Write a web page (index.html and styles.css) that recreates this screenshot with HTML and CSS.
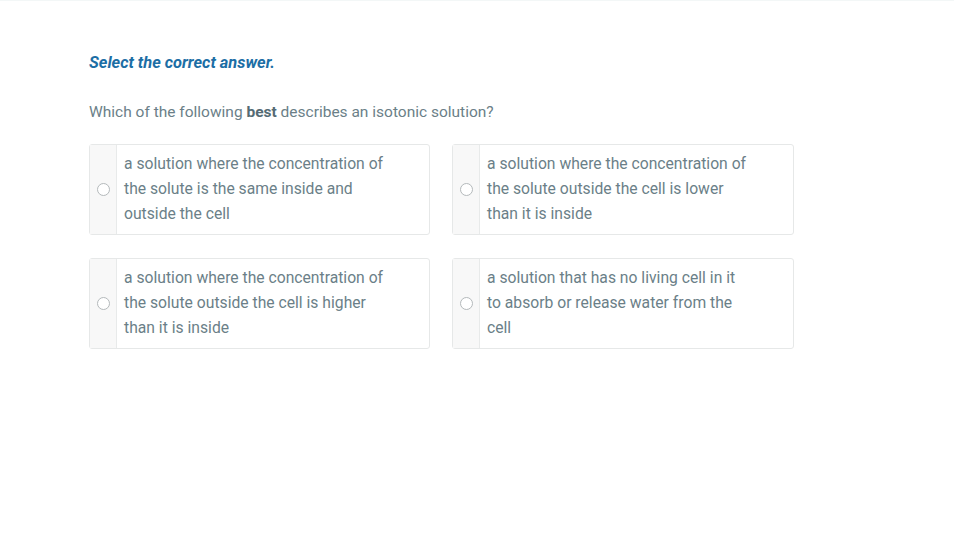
FILE: index.html
```html
<!DOCTYPE html>
<html>
<head>
<meta charset="utf-8">
<link rel="stylesheet" href="styles.css">
</head>
<body>
<div class="page">
  <p class="instr">Select the correct answer.</p>
  <p class="question">Which of the following <b>best</b> describes an isotonic solution?</p>
  <div class="grid">
    <div class="opt"><div class="rail"><span class="radio"></span></div><div class="txt">a solution where the concentration of the solute is the same inside and outside the cell</div></div>
    <div class="opt"><div class="rail"><span class="radio"></span></div><div class="txt">a solution where the concentration of the solute outside the cell is lower than it is inside</div></div>
    <div class="opt"><div class="rail"><span class="radio"></span></div><div class="txt">a solution where the concentration of the solute outside the cell is higher than it is inside</div></div>
    <div class="opt"><div class="rail"><span class="radio"></span></div><div class="txt">a solution that has no living cell in it to absorb or release water from the cell</div></div>
  </div>
</div>
</body>
</html>
```
FILE: styles.css
```css
html, body { margin: 0; padding: 0; background: #fff; }
body { border-top: 1px solid #f3f7f7; }
.page {
  padding: 52px 0 0 89px;
  font-family: Roboto, sans-serif;
  color: #6b7f88;
}
.instr {
  margin: 0;
  font-size: 16.4px;
  font-weight: 700;
  font-style: italic;
  color: #1c6ea5;
  line-height: 20px;
}
.question {
  margin: 28px 0 0 0;
  font-size: 15.5px;
  line-height: 22px;
}
.question b { color: #556b74; }
.grid {
  margin-top: 21px;
  display: grid;
  grid-template-columns: 341px 342px;
  column-gap: 22px;
  row-gap: 23px;
}
.opt {
  display: flex;
  border: 1px solid #e6e8e8;
  border-radius: 3px;
  box-sizing: border-box;
  height: 91px;
}
.rail {
  flex: 0 0 26px;
  background: #f8f8f8;
  border-right: 1px solid #e8eaea;
  display: flex;
  align-items: center;
  justify-content: center;
}
.radio {
  width: 13px;
  height: 13px;
  box-sizing: border-box;
  border: 1px solid #b4b9bb;
  border-radius: 50%;
  background: #fff;
}
.txt {
  width: 263px;
  padding: 6px 0 0 7px;
  font-size: 15.7px;
  line-height: 25px;
}
```
